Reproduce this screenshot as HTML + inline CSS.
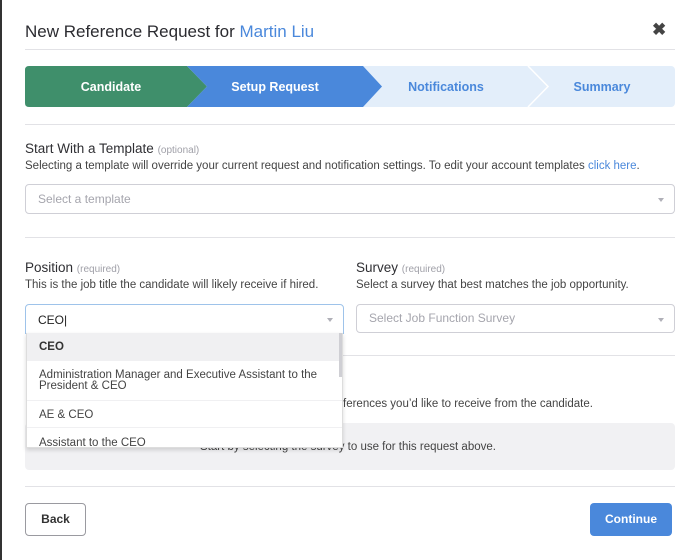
<!DOCTYPE html>
<html><head><style>
*{box-sizing:border-box;margin:0;padding:0}
body{width:698px;height:560px;background:#fff;font-family:"Liberation Sans",sans-serif;position:relative;overflow:hidden;color:#333}
.a{position:absolute}
.hr{position:absolute;height:1px;background:#e2e2e6}
.sel{position:absolute;border:1px solid #cfcfd6;border-radius:4px;height:30px;font-size:12px;color:#a5a5ad;padding:7px 12px}
.car{position:absolute;right:10px;top:13px;border-left:3px solid transparent;border-right:3px solid transparent;border-top:4px solid #b0b0b8}
.lab{font-size:13.5px;color:#2f2f33}
.lab small{font-size:10px;color:#a0a0a8}
.d{font-size:11.5px;color:#444}
.it{position:absolute;left:0;width:316px;padding-left:12px;font-size:11.5px;color:#444;border-bottom:1px solid #f0f0f2}
</style></head><body>
<div class="a" style="left:0;top:0;width:2px;height:560px;background:#333"></div>
<div class="a" style="left:25px;top:22px;font-size:17px;color:#2b2b30">New Reference Request for <span style="color:#4a88db">Martin Liu</span></div>
<div class="a" style="left:652px;top:20px;font-size:17px;font-weight:bold;color:#444">✖</div>
<div class="hr" style="left:25px;top:49px;width:650px"></div>
<svg class="a" style="left:25px;top:66px" width="650" height="42">
<rect x="0" y="0" width="650" height="41" rx="4" fill="#e3eefa"/>
<path d="M4 0H162L182 20.5L162 41H4Q0 41 0 37V4Q0 0 4 0Z" fill="#3f8f6b"/>
<path d="M162 0H338L357 20.5L338 41H162L182 20.5Z" fill="#4a88db"/>
<path d="M503 0L523 20.5L503 41" fill="none" stroke="#fff" stroke-width="1.5"/>
<g font-family="Liberation Sans" font-size="12.5" font-weight="bold" text-anchor="middle">
<text x="86" y="25" fill="#fff">Candidate</text>
<text x="250" y="25" fill="#fff">Setup Request</text>
<text x="421" y="25" fill="#4a88db">Notifications</text>
<text x="577" y="25" fill="#4a88db">Summary</text></g>
</svg>
<div class="hr" style="left:25px;top:124px;width:650px"></div>
<div class="a lab" style="left:25px;top:141px">Start With a Template <small>(optional)</small></div>
<div class="a d" style="left:25px;top:160px">Selecting a template will override your current request and notification settings. To edit your account templates <span style="color:#4a88db">click here</span>.</div>
<div class="sel" style="left:25px;top:184px;width:650px">Select a template<div class="car"></div></div>
<div class="hr" style="left:25px;top:237px;width:650px"></div>
<div class="a lab" style="left:25px;top:260px">Position <small>(required)</small></div>
<div class="a d" style="left:25px;top:279px">This is the job title the candidate will likely receive if hired.</div>
<div class="a lab" style="left:356px;top:260px">Survey <small>(required)</small></div>
<div class="a d" style="left:356px;top:279px">Select a survey that best matches the job opportunity.</div>
<div class="sel" style="left:356px;top:304px;width:319px;height:29px;padding-top:6px">Select Job Function Survey<div class="car"></div></div>
<div class="hr" style="left:343px;top:355px;width:332px"></div>
<div class="a d" style="left:343px;top:398px">ferences you’d like to receive from the candidate.</div>
<div class="a" style="left:25px;top:423px;width:650px;height:47px;background:#f1f1f3;border-radius:4px"></div>
<div class="a d" style="left:200px;top:441px;color:#444">Start by selecting the survey to use for this request above.</div>
<div class="sel" style="left:25px;top:304px;width:319px;height:30px;border-color:#9ec3ea;color:#222;border-radius:4px 4px 0 0;padding-top:8px">CEO|<div class="car"></div></div>
<div class="a" style="left:26px;top:333px;width:317px;height:115px;background:#fff;box-shadow:0 2px 4px rgba(0,0,0,.15);overflow:hidden;border:1px solid #ddd;border-top:0">
<div class="it" style="top:0;height:28px;background:#f0f0f2;font-weight:bold;padding-top:8px;color:#333">CEO</div>
<div class="it" style="top:28px;height:40px;padding-top:9px;line-height:11px">Administration Manager and Executive Assistant to the<br>President &amp; CEO</div>
<div class="it" style="top:68px;height:27px;padding-top:8px">AE &amp; CEO</div>
<div class="it" style="top:95px;height:27px;padding-top:9px">Assistant to the CEO</div>
<div class="a" style="right:0;top:0;width:3px;height:44px;background:#cfcfd4"></div>
</div>
<div class="hr" style="left:25px;top:486px;width:650px"></div>
<div class="a" style="left:25px;top:503px;width:61px;height:33px;border:1px solid #9a9aa0;border-radius:4px;font-size:12px;font-weight:bold;color:#333;text-align:center;line-height:31px">Back</div>
<div class="a" style="left:590px;top:503px;width:82px;height:33px;background:#4a88db;border-radius:4px;font-size:12px;font-weight:bold;color:#fff;text-align:center;line-height:33px">Continue</div>
</body></html>
